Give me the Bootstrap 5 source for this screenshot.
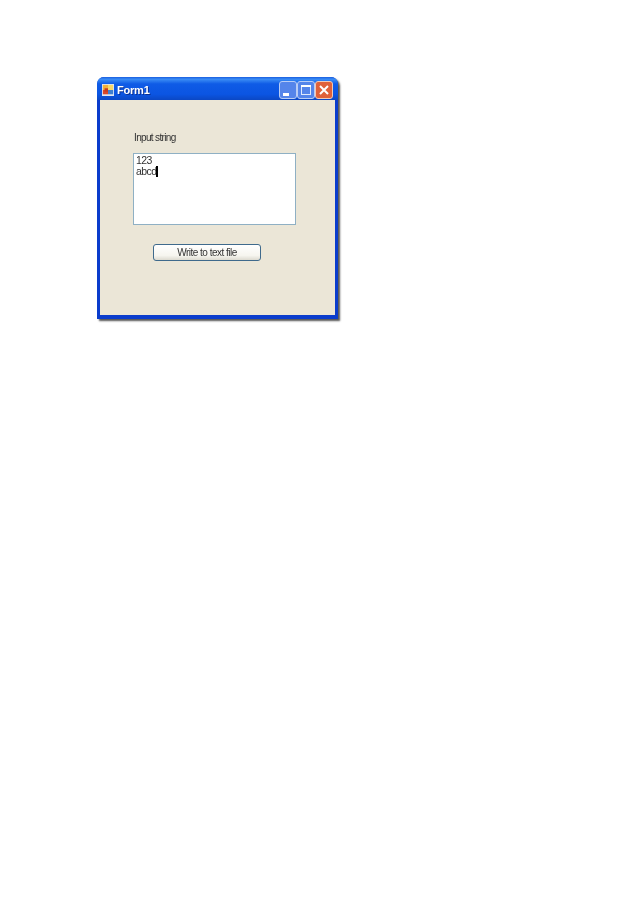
<!DOCTYPE html>
<html lang="en">
<head>
<meta charset="utf-8">
<title>Form1</title>
<link href="https://cdn.jsdelivr.net/npm/bootstrap@5.3.0/dist/css/bootstrap.min.css" rel="stylesheet">
<style>
body{background:#fff;font-family:"Liberation Sans",Arial,sans-serif;padding:77px 0 0 97px;min-height:100vh;}
.xp-window{width:241px;height:242px;background:#0a3ccc;border-radius:7px 7px 0 0;box-shadow:2px 2px 2px #555;padding:0 3px 4px 3px;filter:blur(.35px);}
.xp-title{height:23px;padding:3px 5px 0 5px;background:linear-gradient(180deg,#1a5fe0 0,#3a8cf5 10%,#0f5be6 30%,#0b55e2 75%,#0b47c4 100%);border-radius:7px 7px 0 0;margin:0 -3px;color:#fff;font-weight:700;font-size:11px;letter-spacing:-.2px;text-shadow:1px 1px 0 #0a2f90;}
.xp-appicon{width:12px;height:12px;flex:none;}
.xp-name{margin-left:3px;}
.xp-ctl{width:18px;height:18px;flex:none;display:block;}
.xp-client{height:215px;background:#ebe6d7;padding:32px 0 0 34px;color:#333;font-size:10px;line-height:12px;letter-spacing:-.65px;}
.xp-label{height:13px;margin:0 0 8px 0;}
.xp-text{width:163px;height:72px;min-height:0;background:#fff;border:1px solid #8fb0c4;border-radius:0;padding:1px 2px;margin-left:-1px;font-size:10.5px;line-height:11px;color:#333;letter-spacing:-.6px;}
.xp-caret{display:inline-block;width:1.5px;height:11px;background:#000;vertical-align:top;}
.xp-btn{display:block;width:108px;height:17px;margin:19px 0 0 19px;padding:0;background:linear-gradient(180deg,#fff 0,#f6f5ef 70%,#dcdad0 100%);border:1px solid #3f6a8c;border-radius:3px;font-size:10px;line-height:14px;color:#333;letter-spacing:-.5px;}
</style>
</head>
<body>
<div class="xp-window">
  <div class="xp-title d-flex align-items-center">
    <svg class="xp-appicon" viewBox="0 0 14 14"><rect width="14" height="14" fill="#dfe6f2"/><rect x="1" y="1" width="6" height="6" fill="#f3b13a"/><rect x="7" y="1" width="6" height="6" fill="#f6d76a"/><rect x="1" y="7" width="6" height="5" fill="#d9482b"/><rect x="7" y="7" width="6" height="5" fill="#3f7fd0"/><rect x="3" y="5" width="4" height="4" fill="#c73a20"/></svg>
    <span class="xp-name flex-grow-1">Form1</span>
    <div class="d-flex">
      <svg class="xp-ctl" viewBox="0 0 18 18"><rect x=".5" y=".5" width="17" height="17" rx="2.5" fill="#5585ea" stroke="#b9cdf5"/><rect x="4" y="12" width="6" height="3" fill="#fff"/></svg>
      <svg class="xp-ctl" viewBox="0 0 18 18"><rect x=".5" y=".5" width="17" height="17" rx="2.5" fill="#5585ea" stroke="#b9cdf5"/><rect x="4.5" y="4.5" width="9" height="9" fill="none" stroke="#dfe9fb"/><rect x="4" y="4" width="10" height="2" fill="#fff"/></svg>
      <svg class="xp-ctl" viewBox="0 0 18 18"><rect x=".5" y=".5" width="17" height="17" rx="2.5" fill="#e0613a" stroke="#f0c9b8"/><path d="M5 5l8 8M13 5l-8 8" stroke="#fff" stroke-width="2"/></svg>
    </div>
  </div>
  <div class="xp-client">
    <div class="xp-label">Input string</div>
    <div class="xp-text form-control">123<br>abcd<span class="xp-caret"></span></div>
    <button type="button" class="btn xp-btn">Write to text file</button>
  </div>
</div>
<script src="https://cdn.jsdelivr.net/npm/bootstrap@5.3.0/dist/js/bootstrap.bundle.min.js"></script>
</body>
</html>
